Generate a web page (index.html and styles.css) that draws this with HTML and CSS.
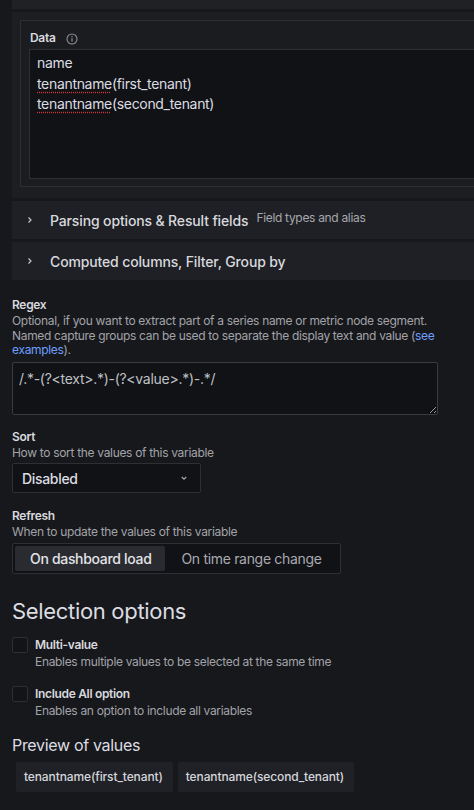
FILE: index.html
```html
<!DOCTYPE html>
<html>
<head>
<meta charset="utf-8">
<link rel="stylesheet" href="styles.css">
</head>
<body>
<div class="page">
  <div class="topbar"></div>
  <div class="data-section">
    <div class="data-box">
      <div class="data-label">Data
        <svg class="info" width="12" height="12" viewBox="0 0 12 12"><circle cx="6" cy="6" r="5" fill="none" stroke="#8e8f95" stroke-width="1.1"/><rect x="5.4" y="5.2" width="1.2" height="3.4" fill="#8e8f95"/><circle cx="6" cy="3.7" r="0.7" fill="#8e8f95"/></svg>
      </div>
      <div class="data-area">
        <div>name</div>
        <div><span class="spell">tenantname</span>(first_tenant)</div>
        <div><span class="spell">tenantname</span>(second_tenant)</div>
      </div>
    </div>
  </div>
  <div class="row">
    <svg class="chev" width="8" height="8" viewBox="0 0 8 8"><path d="M2.5 1.5 L5 4 L2.5 6.5" fill="none" stroke="#c4c5ca" stroke-width="1.2"/></svg>
    <span class="row-title">Parsing options &amp; Result fields</span>
    <span class="row-sub">Field types and alias</span>
  </div>
  <div class="row">
    <svg class="chev" width="8" height="8" viewBox="0 0 8 8"><path d="M2.5 1.5 L5 4 L2.5 6.5" fill="none" stroke="#c4c5ca" stroke-width="1.2"/></svg>
    <span class="row-title">Computed columns, Filter, Group by</span>
  </div>

  <div class="field regex">
    <div class="label">Regex</div>
    <div class="desc">Optional, if you want to extract part of a series name or metric node segment. Named capture groups can be used to separate the display text and value (<span class="link">see examples</span>).</div>
    <textarea class="regex-input" readonly>/.*-(?&lt;text&gt;.*)-(?&lt;value&gt;.*)-.*/</textarea>
  </div>

  <div class="field sort">
    <div class="label">Sort</div>
    <div class="desc">How to sort the values of this variable</div>
    <div class="select">
      <span>Disabled</span>
      <svg width="10" height="10" viewBox="0 0 10 10"><path d="M2.8 4 L5 6.2 L7.2 4" fill="none" stroke="#a9aab0" stroke-width="1.2"/></svg>
    </div>
  </div>

  <div class="field refresh">
    <div class="label">Refresh</div>
    <div class="desc">When to update the values of this variable</div>
    <div class="radio-group">
      <div class="radio active">On dashboard load</div>
      <div class="radio">On time range change</div>
    </div>
  </div>

  <h2 class="section-title">Selection options</h2>
  <div class="check">
    <div class="box"></div>
    <div class="check-text">
      <div class="check-label">Multi-value</div>
      <div class="check-desc">Enables multiple values to be selected at the same time</div>
    </div>
  </div>
  <div class="check second">
    <div class="box"></div>
    <div class="check-text">
      <div class="check-label">Include All option</div>
      <div class="check-desc">Enables an option to include all variables</div>
    </div>
  </div>

  <h3 class="preview-title">Preview of values</h3>
  <div class="chips">
    <div class="chip">tenantname(first_tenant)</div>
    <div class="chip">tenantname(second_tenant)</div>
  </div>
</div>
</body>
</html>
```
FILE: styles.css
```css
html, body {
  margin: 0;
  padding: 0;
  background: #17181c;
  overflow: hidden;
  height: 810px;
}
body {
  font-family: Inter, "Noto Sans", sans-serif;
  color: #d5d6db;
  letter-spacing: -0.02em;
}
.page {
  padding-left: 12px;
}
.topbar {
  height: 9px;
  background: #1f2125;
}
.data-section {
  margin-top: 3px;
  background: #1d1e22;
  padding: 8px 0 11px 8px;
}
.data-box {
  border: 1px solid #2d2e33;
  border-right: none;
  background: #1b1c20;
  padding: 9px 0 7px 8px;
}
.data-label {
  display: flex;
  align-items: center;
  font-size: 12px;
  font-weight: 600;
  line-height: 16px;
  height: 16px;
  padding-left: 1px;
  color: #d8d9de;
}
.info {
  margin-left: 11px;
  margin-top: 1px;
}
.data-area {
  margin-top: 3px;
  height: 125px;
  background: #111216;
  border: 1px solid #2e2f34;
  border-right: none;
  padding: 3px 0 0 7px;
  font-size: 14px;
  line-height: 20.5px;
  color: #dcdde2;
}
.spell {
  text-decoration-line: underline;
  text-decoration-style: dotted;
  text-decoration-color: #d0343a;
  text-underline-offset: 3px;
}
.row {
  margin-top: 3px;
  height: 38px;
  background: #1f2025;
  display: flex;
  align-items: center;
  padding-left: 14px;
}
.chev {
  flex: none;
}
.row-title {
  margin-left: 16px;
  font-size: 14px;
  font-weight: 500;
  color: #d8d9de;
  letter-spacing: -0.01em;
}
.row-sub {
  margin-left: 8px;
  font-size: 12px;
  color: #a6a7ad;
  position: relative;
  top: -3px;
}
.field {
  margin-top: 14px;
}
.field.regex {
  margin-top: 17px;
}
.label {
  font-size: 12px;
  font-weight: 600;
  line-height: 16px;
  color: #d8d9de;
}
.desc {
  font-size: 12px;
  line-height: 14.5px;
  color: #a2a3a9;
  width: 440px;
  padding-top: 1px;
}
.link {
  color: #6e9fff;
}
.regex-input {
  display: block;
  box-sizing: border-box;
  margin: 4px 0 0 0;
  width: 426px;
  height: 53px;
  background: #111216;
  border: 1px solid #3a3b40;
  border-radius: 2px;
  padding: 7px 6px;
  font-family: Inter, "Noto Sans", sans-serif;
  font-size: 14px;
  letter-spacing: -0.02em;
  line-height: 18px;
  color: #bfc0c5;
  outline: none;
}
.field.sort {
  margin-top: 14px;
}
.select {
  box-sizing: border-box;
  margin-top: 3px;
  width: 189px;
  height: 30px;
  background: #111216;
  border: 1px solid #2e2f34;
  border-radius: 2px;
  display: flex;
  align-items: center;
  justify-content: space-between;
  padding: 0 11px 0 9px;
  font-size: 14px;
  font-weight: 500;
  color: #dcdde2;
}
.field.refresh {
  margin-top: 15px;
}
.radio-group {
  box-sizing: border-box;
  margin-top: 3px;
  display: inline-flex;
  height: 31px;
  border: 1px solid #2e2f34;
  border-radius: 2px;
  background: #111216;
  padding: 2px;
}
.radio {
  display: flex;
  align-items: center;
  padding: 0 16px 0 16px;
  font-size: 14px;
  color: #a9aab0;
  border-radius: 2px;
}
.radio.active {
  background: #2a2b30;
  color: #e2e3e8;
  font-weight: 500;
  padding: 0 14px 0 15px;
}
.section-title {
  margin: 23px 0 0 0;
  font-size: 22px;
  font-weight: 400;
  line-height: 28px;
  color: #dcdde2;
}
.check {
  margin-top: 12px;
  display: flex;
  align-items: flex-start;
}
.check.second {
  margin-top: 16px;
}
.box {
  flex: none;
  box-sizing: border-box;
  width: 16px;
  height: 16px;
  margin-top: 0;
  border: 1px solid #2e2f34;
  border-radius: 2px;
  background: #131418;
}
.check-text {
  margin-left: 7px;
}
.check-label {
  font-size: 12px;
  font-weight: 600;
  line-height: 16px;
  color: #d8d9de;
}
.check-desc {
  font-size: 12px;
  line-height: 17px;
  color: #a2a3a9;
}
.preview-title {
  margin: 15px 0 0 0;
  font-size: 16px;
  font-weight: 400;
  line-height: 22px;
  color: #dcdde2;
}
.chips {
  margin-top: 6px;
  display: flex;
  gap: 5px;
  padding-left: 4px;
}
.chip {
  height: 30px;
  display: flex;
  align-items: center;
  padding: 0 10px 0 8px;
  background: #202126;
  border-radius: 2px;
  font-size: 12px;
  font-weight: 500;
  color: #d5d6db;
  letter-spacing: -0.01em;
}
```
